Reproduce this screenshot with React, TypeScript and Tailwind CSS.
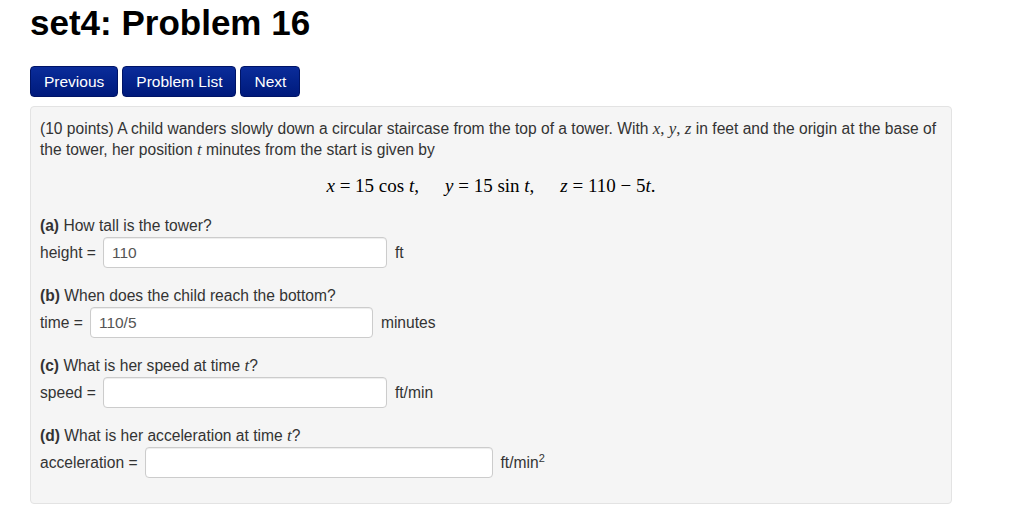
import React from "react";

const sans = { fontFamily: '"Liberation Sans", Arial, Helvetica, sans-serif' };
const serif = { fontFamily: '"Liberation Serif", "Times New Roman", serif' };

function V({ children }: { children: React.ReactNode }) {
  return <span className="italic">{children}</span>;
}

function Row({
  q,
  label,
  value,
  width,
  unit,
}: {
  q: React.ReactNode;
  label: string;
  value: string;
  width: string;
  unit: React.ReactNode;
}) {
  return (
    <div className="mb-[17px]">
      <div className="leading-[21px]">{q}</div>
      <div className="mt-[1px] flex h-[31px] items-center">
        <span className="mr-[7px]">{label}</span>
        <input
          readOnly
          value={value}
          className={`h-[31px] ${width} rounded-[4px] border border-[#cccccc] bg-white px-[8px] text-[15.5px] text-[#555555] shadow-[inset_0_1px_1px_rgba(0,0,0,0.075)] outline-none`}
          style={sans}
        />
        <span className="ml-[8px]">{unit}</span>
      </div>
    </div>
  );
}

export default function App() {
  return (
    <div className="min-h-[526px] bg-white pl-[30px] text-[#333333]" style={sans}>
      <h1 className="pt-[4px] text-[35px] font-bold leading-[38px] text-black">set4: Problem 16</h1>
      <div className="mt-[24px] flex gap-[4px]">
        {["Previous", "Problem List", "Next"].map((t) => (
          <button
            key={t}
            className="h-[31px] rounded-[4px] border border-[#001466] bg-gradient-to-b from-[#0b2c9a] to-[#001a7c] px-[13px] text-[15.5px] text-white"
            style={sans}
          >
            {t}
          </button>
        ))}
      </div>
      <div className="mt-[9px] w-[922px] rounded-[4px] border border-[#e3e3e3] bg-[#f5f5f5] px-[9px] pb-[8px] pt-[11px] text-[15.6px]">
        <p className="leading-[21px]">
          (10 points) A child wanders slowly down a circular staircase from the top of a tower. With{" "}
          <span className="text-[17px] leading-none" style={serif}>
            <V>x</V>, <V>y</V>, <V>z</V>
          </span>{" "}
          in feet and the origin at the base of the tower, her position{" "}
          <span className="text-[17px] leading-none" style={serif}>
            <V>t</V>
          </span>{" "}
          minutes from the start is given by
        </p>
        <div className="mb-[17px] mt-[14px] flex justify-center text-[19px] leading-[24px] text-black" style={serif}>
          <span>
            <V>x</V> = 15 cos <V>t</V>,
          </span>
          <span className="ml-[26px]">
            <V>y</V> = 15 sin <V>t</V>,
          </span>
          <span className="ml-[26px]">
            <V>z</V> = 110 − 5<V>t</V>.
          </span>
        </div>
        <Row
          q={
            <>
              <b>(a)</b> How tall is the tower?
            </>
          }
          label="height ="
          value="110"
          width="w-[284px]"
          unit="ft"
        />
        <Row
          q={
            <>
              <b>(b)</b> When does the child reach the bottom?
            </>
          }
          label="time ="
          value="110/5"
          width="w-[283px]"
          unit="minutes"
        />
        <Row
          q={
            <>
              <b>(c)</b> What is her speed at time{" "}
              <span className="text-[17px] leading-none" style={serif}>
                <V>t</V>
              </span>
              ?
            </>
          }
          label="speed ="
          value=""
          width="w-[284px]"
          unit="ft/min"
        />
        <Row
          q={
            <>
              <b>(d)</b> What is her acceleration at time{" "}
              <span className="text-[17px] leading-none" style={serif}>
                <V>t</V>
              </span>
              ?
            </>
          }
          label="acceleration ="
          value=""
          width="w-[348px]"
          unit={
            <>
              ft/min<sup className="text-[11px]">2</sup>
            </>
          }
        />
      </div>
    </div>
  );
}
